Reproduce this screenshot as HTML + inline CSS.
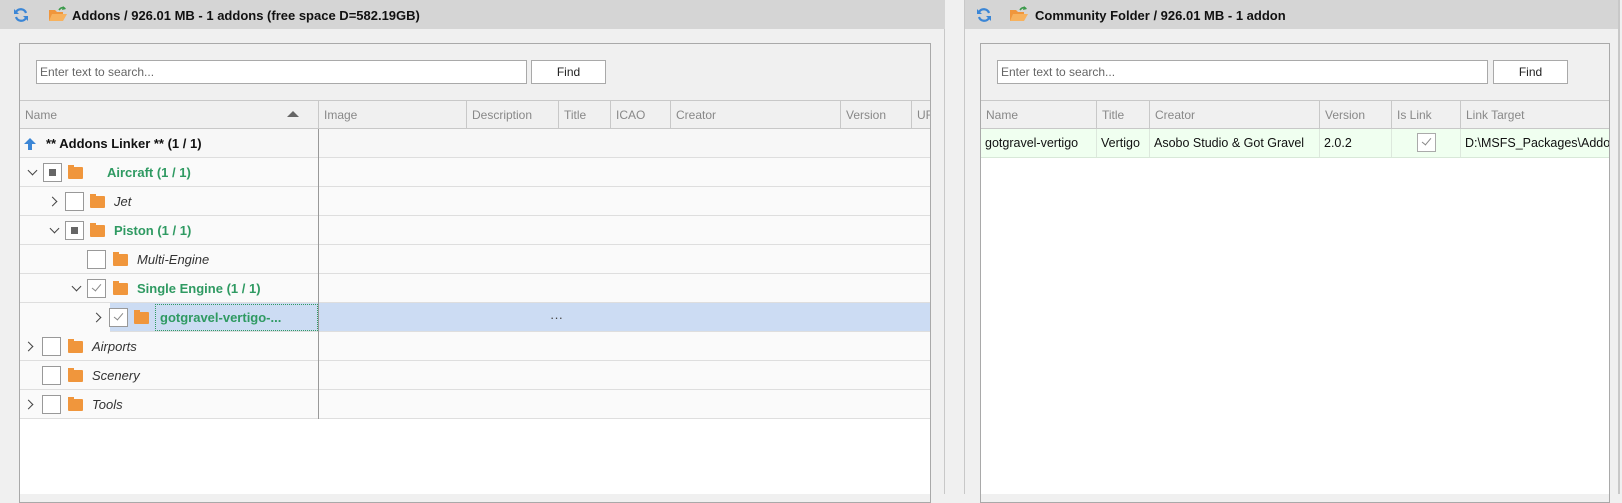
<!DOCTYPE html>
<html><head><style>
*{box-sizing:border-box;margin:0;padding:0}
body{width:1622px;height:494px;background:#f0f0f0;font-family:"Liberation Sans",sans-serif;font-size:12px;color:#222;position:relative;overflow:hidden}
.abs{position:absolute}
.hdr{background:#d5d5d5;height:29px;top:0;font-weight:bold;font-size:13px;line-height:31px;color:#111}
.box{border:1px solid #a9a9a9;background:#f0f0f0}
.inp{background:#fff;border:1px solid #a9a9a9;height:24px;line-height:22px;padding-left:3px;color:#666}
.btn{background:#fff;border:1px solid #a9a9a9;height:24px;line-height:22px;text-align:center;color:#222}
.gh{background:#f0f0f0;border-bottom:1px solid #c8c8c8;border-top:1px solid #c8c8c8;height:29px}
.gh div{position:absolute;top:0;height:28px;line-height:28px;padding-left:5px;color:#888;border-right:1px solid #c8c8c8}
.row{position:absolute;left:0;height:29px;border-bottom:1px solid #dedede;background:#fafafa;font-size:13px}
.cb{position:absolute;width:19px;height:19px;border:1px solid #999;background:#fff;top:5px}
.cb.ind::after{content:"";position:absolute;left:5px;top:5px;width:7px;height:7px;background:#666}
.cb.chk::after{content:"";position:absolute;left:6px;top:2px;width:4px;height:8px;border:solid #888;border-width:0 1.5px 1.5px 0;transform:rotate(40deg)}
.fd{position:absolute;top:9px;width:15px;height:12px;background:#f0963c;border-radius:1px}
.fd::before{content:"";position:absolute;left:0;top:-2px;width:6px;height:3px;background:#f0963c}
.tx{position:absolute;top:0;line-height:29px;white-space:nowrap}
.g{color:#2f9a62;font-weight:bold}
.i{font-style:italic;color:#333}
.chev{position:absolute;width:7px;height:7px;border:solid #444;border-width:0 1.5px 1.5px 0}
</style></head><body>
<div class="abs" style="left:0;top:0;width:945px;height:494px;border-right:1px solid #c8c8c8"></div>
<div class="abs hdr" style="left:0;width:945px;padding-left:72px">Addons / 926.01 MB - 1 addons (free space D=582.19GB)</div>
<svg class="abs" style="left:13px;top:7px" width="16" height="16" viewBox="0 0 16 16"><path d="M13 6A5.5 5.5 0 0 0 3 5" fill="none" stroke="#3b86d6" stroke-width="2.2"/><path d="M1 2v5h5z" fill="#3b86d6"/><path d="M3 10a5.5 5.5 0 0 0 10 1" fill="none" stroke="#3b86d6" stroke-width="2.2"/><path d="M15 14V9h-5z" fill="#3b86d6"/></svg>
<svg class="abs" style="left:48px;top:6px" width="20" height="17" viewBox="0 0 20 17"><path d="M1 4h6l2 2h6v9H1z" fill="#f0963c"/><path d="M4 8h15l-4 7H1z" fill="#f7b25e"/><path d="M11 4c2-3 5-3 6-1" fill="none" stroke="#3a9a4a" stroke-width="1.6"/><path d="M15 0l3 3-4 1z" fill="#3a9a4a"/></svg>
<div class="abs box" style="left:19px;top:43px;width:912px;height:460px"></div>
<div class="abs inp" style="left:36px;top:60px;width:491px">Enter text to search...</div>
<div class="abs btn" style="left:531px;top:60px;width:75px">Find</div>
<div class="abs" style="left:20px;top:100px;width:910px;height:394px;background:#fff;overflow:hidden">
 <div class="abs gh" style="left:0;top:0;width:910px">
  <div style="left:0;width:299px">Name</div>
  <div style="left:299px;width:148px">Image</div>
  <div style="left:447px;width:92px">Description</div>
  <div style="left:539px;width:52px">Title</div>
  <div style="left:591px;width:60px">ICAO</div>
  <div style="left:651px;width:170px">Creator</div>
  <div style="left:821px;width:71px">Version</div>
  <div style="left:892px;width:40px">UF</div>
 </div>
 <div class="abs" style="left:267px;top:11px;width:0;height:0;border-left:6px solid transparent;border-right:6px solid transparent;border-bottom:6px solid #666"></div>
 <div class="abs" style="left:298px;top:29px;width:1px;height:290px;background:#999;z-index:2"></div>
 <div class="row" style="top:29px;width:910px;background:#f7f7f7"><svg class="abs" style="left:3px;top:8px" width="14" height="14" viewBox="0 0 14 14"><path d="M7 1L1 7h4v6h4V7h4z" fill="#3b86d6"/></svg><div class="tx" style="left:26px;font-weight:bold;color:#111;font-size:13px">** Addons Linker ** (1 / 1)</div></div>
 <div class="row" style="top:58px;width:910px"><div class="chev" style="left:9px;top:9px;transform:rotate(45deg)"></div><div class="cb ind" style="left:23px"></div><div class="fd" style="left:48px"></div><div class="tx g" style="left:87px">Aircraft (1 / 1)</div></div>
 <div class="row" style="top:87px;width:910px"><div class="chev" style="left:29px;top:11px;transform:rotate(-45deg)"></div><div class="cb" style="left:45px"></div><div class="fd" style="left:70px"></div><div class="tx i" style="left:94px">Jet</div></div>
 <div class="row" style="top:116px;width:910px"><div class="chev" style="left:31px;top:9px;transform:rotate(45deg)"></div><div class="cb ind" style="left:45px"></div><div class="fd" style="left:70px"></div><div class="tx g" style="left:94px">Piston (1 / 1)</div></div>
 <div class="row" style="top:145px;width:910px"><div class="cb" style="left:67px"></div><div class="fd" style="left:93px"></div><div class="tx i" style="left:117px">Multi-Engine</div></div>
 <div class="row" style="top:174px;width:910px"><div class="chev" style="left:53px;top:9px;transform:rotate(45deg)"></div><div class="cb chk" style="left:67px"></div><div class="fd" style="left:93px"></div><div class="tx g" style="left:117px">Single Engine (1 / 1)</div></div>
 <div class="row" style="top:203px;width:910px;background:#ccdcf3"><div class="abs" style="left:0;top:0;width:90px;height:29px;background:#fafafa"></div><div class="chev" style="left:73px;top:11px;transform:rotate(-45deg)"></div><div class="cb chk" style="left:89px"></div><div class="fd" style="left:114px"></div><div class="abs" style="left:135px;top:1px;width:163px;height:27px;border:1px dotted #2f9a62"></div><div class="tx g" style="left:140px">gotgravel-vertigo-...</div><div class="tx" style="left:530px;color:#444">···</div></div>
 <div class="row" style="top:232px;width:910px"><div class="chev" style="left:5px;top:11px;transform:rotate(-45deg)"></div><div class="cb" style="left:22px"></div><div class="fd" style="left:48px"></div><div class="tx i" style="left:72px">Airports</div></div>
 <div class="row" style="top:261px;width:910px"><div class="cb" style="left:22px"></div><div class="fd" style="left:48px"></div><div class="tx i" style="left:72px">Scenery</div></div>
 <div class="row" style="top:290px;width:910px"><div class="chev" style="left:5px;top:11px;transform:rotate(-45deg)"></div><div class="cb" style="left:22px"></div><div class="fd" style="left:48px"></div><div class="tx i" style="left:72px">Tools</div></div>
</div>
<div class="abs" style="left:964px;top:0;width:656px;height:494px;border-left:1px solid #c8c8c8;border-right:2px solid #c8c8c8"></div>
<div class="abs hdr" style="left:965px;width:653px;padding-left:70px">Community Folder / 926.01 MB - 1 addon</div>
<svg class="abs" style="left:976px;top:7px" width="16" height="16" viewBox="0 0 16 16"><path d="M13 6A5.5 5.5 0 0 0 3 5" fill="none" stroke="#3b86d6" stroke-width="2.2"/><path d="M1 2v5h5z" fill="#3b86d6"/><path d="M3 10a5.5 5.5 0 0 0 10 1" fill="none" stroke="#3b86d6" stroke-width="2.2"/><path d="M15 14V9h-5z" fill="#3b86d6"/></svg>
<svg class="abs" style="left:1009px;top:6px" width="20" height="17" viewBox="0 0 20 17"><path d="M1 4h6l2 2h6v9H1z" fill="#f0963c"/><path d="M4 8h15l-4 7H1z" fill="#f7b25e"/><path d="M11 4c2-3 5-3 6-1" fill="none" stroke="#3a9a4a" stroke-width="1.6"/><path d="M15 0l3 3-4 1z" fill="#3a9a4a"/></svg>
<div class="abs box" style="left:980px;top:43px;width:630px;height:460px"></div>
<div class="abs inp" style="left:997px;top:60px;width:491px">Enter text to search...</div>
<div class="abs btn" style="left:1493px;top:60px;width:75px">Find</div>
<div class="abs" style="left:981px;top:100px;width:628px;height:394px;background:#fff;overflow:hidden">
 <div class="abs gh" style="left:0;top:0;width:628px">
  <div style="left:0;width:116px">Name</div>
  <div style="left:116px;width:53px">Title</div>
  <div style="left:169px;width:170px">Creator</div>
  <div style="left:339px;width:72px">Version</div>
  <div style="left:411px;width:69px">Is Link</div>
  <div style="left:480px;width:160px">Link Target</div>
 </div>
 <div class="abs" style="left:0;top:29px;width:628px;height:29px;background:#f0fff0;border-bottom:1px solid #d8e8d8;color:#111;line-height:28px;font-size:12.5px">
  <div class="abs" style="left:0;width:116px;height:28px;padding-left:4px;border-right:1px solid #dde8dd">gotgravel-vertigo</div>
  <div class="abs" style="left:116px;width:53px;height:28px;padding-left:4px;border-right:1px solid #dde8dd">Vertigo</div>
  <div class="abs" style="left:169px;width:170px;height:28px;padding-left:4px;border-right:1px solid #dde8dd">Asobo Studio &amp; Got Gravel</div>
  <div class="abs" style="left:339px;width:72px;height:28px;padding-left:4px;border-right:1px solid #dde8dd">2.0.2</div>
  <div class="abs" style="left:411px;width:69px;height:28px;border-right:1px solid #dde8dd"><div class="cb chk" style="left:25px;top:4px;border-color:#aaa"></div></div>
  <div class="abs" style="left:480px;width:160px;height:28px;padding-left:4px;white-space:nowrap">D:\MSFS_Packages\Addons</div>
 </div>
</div>
</body></html>
